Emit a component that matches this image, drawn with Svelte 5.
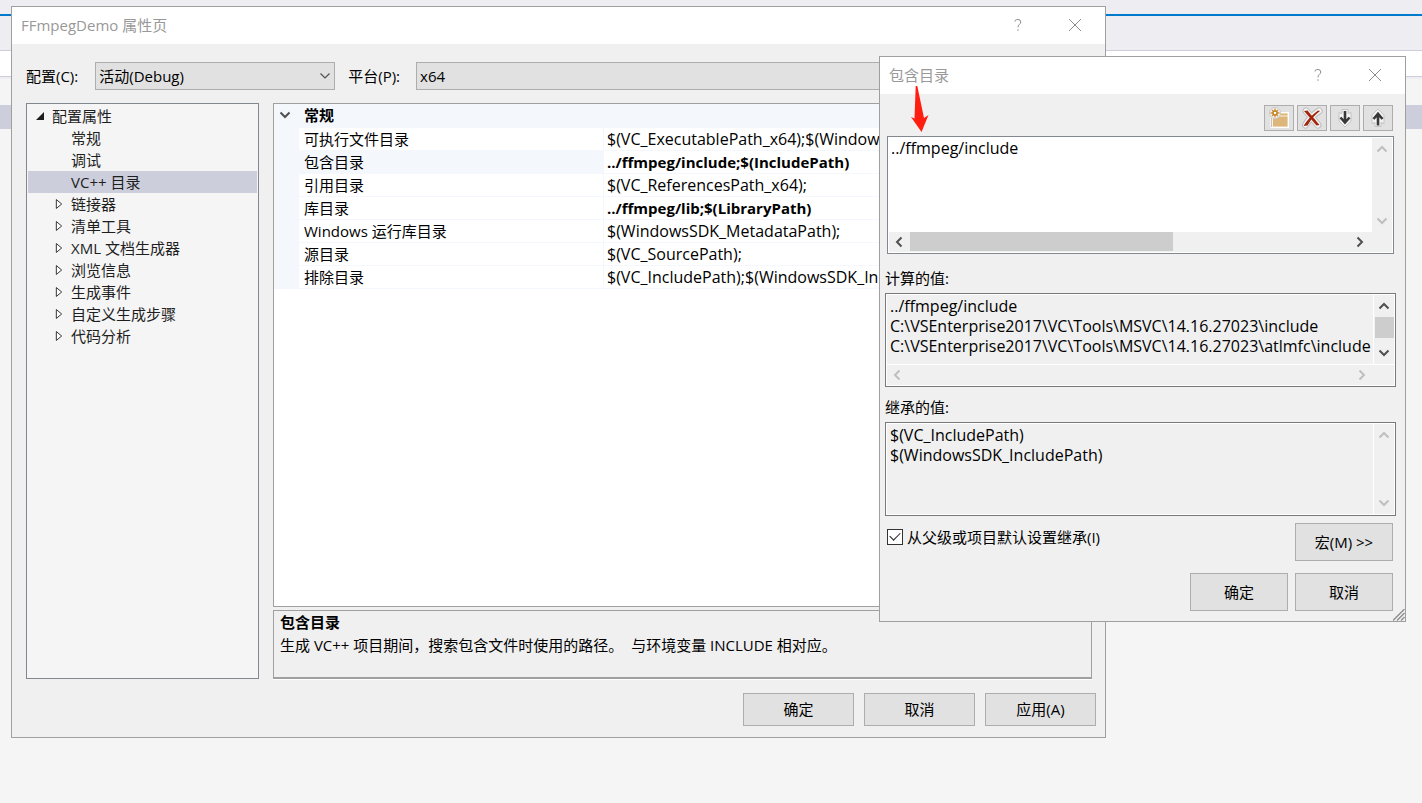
<script>
  const tree = [
    { label: '常规' },
    { label: '调试' },
    { label: 'VC++ 目录', selected: true },
    { label: '链接器', parent: true },
    { label: '清单工具', parent: true },
    { label: 'XML 文档生成器', parent: true },
    { label: '浏览信息', parent: true },
    { label: '生成事件', parent: true },
    { label: '自定义生成步骤', parent: true },
    { label: '代码分析', parent: true }
  ];

  const properties = [
    { name: '可执行文件目录', value: '$(VC_ExecutablePath_x64);$(Windows' },
    { name: '包含目录', value: '../ffmpeg/include;$(IncludePath)', changed: true, active: true },
    { name: '引用目录', value: '$(VC_ReferencesPath_x64);' },
    { name: '库目录', value: '../ffmpeg/lib;$(LibraryPath)', changed: true },
    { name: 'Windows 运行库目录', value: '$(WindowsSDK_MetadataPath);' },
    { name: '源目录', value: '$(VC_SourcePath);' },
    { name: '排除目录', value: '$(VC_IncludePath);$(WindowsSDK_Inc' }
  ];

  let includes = $state('../ffmpeg/include');
  let inherit = $state(true);

  const evaluated = [
    '../ffmpeg/include',
    'C:\\VSEnterprise2017\\VC\\Tools\\MSVC\\14.16.27023\\include',
    'C:\\VSEnterprise2017\\VC\\Tools\\MSVC\\14.16.27023\\atlmfc\\include'
  ].join('\n');
  const inherited = '$(VC_IncludePath)\n$(WindowsSDK_IncludePath)';

  const chevrons = {
    up: 'M1.5 8.5 L6 4 L10.5 8.5',
    down: 'M1.5 3.5 L6 8 L10.5 3.5',
    left: 'M8.5 1.5 L4 6 L8.5 10.5',
    right: 'M3.5 1.5 L8 6 L3.5 10.5'
  };
</script>

{#snippet chevron(dir, muted)}
  <svg class="chevron" class:muted width="12" height="12" viewBox="0 0 12 12" aria-hidden="true">
    <path d={chevrons[dir]} />
  </svg>
{/snippet}

{#snippet captionButtons()}
  <button class="caption" type="button" aria-label="帮助">
    <svg width="10" height="14" viewBox="0 0 10 14" aria-hidden="true">
      <path d="M2 3.5 V2.6 Q3 1.5 5 1.5 Q7.8 1.5 7.8 4 Q7.8 5.5 6.2 6.6 Q5 7.5 5 9.3 M5 11.3 V12.8" />
    </svg>
  </button>
  <button class="caption" type="button" aria-label="关闭">
    <svg width="14" height="14" viewBox="0 0 14 14" aria-hidden="true">
      <path d="M1 1 L13 13 M13 1 L1 13" />
    </svg>
  </button>
{/snippet}

<div class="desktop">
  <div class="ide" aria-hidden="true">
    <div class="menu-strip"></div>
    <div class="tool-strip"></div>
    <div class="tab-strip"></div>
    <div class="editor"><div class="band"></div></div>
  </div>

  <section class="window pages" aria-labelledby="pages-title">
    <header>
      <h1 id="pages-title">FFmpegDemo 属性页</h1>
      {@render captionButtons()}
    </header>

    <div class="filters">
      <label for="config">配置(C):</label>
      <div class="combo config">
        <select id="config"><option>活动(Debug)</option></select>
        <svg width="12" height="8" viewBox="0 0 12 8" aria-hidden="true"><path d="M1.5 1.5 L6 6 L10.5 1.5" /></svg>
      </div>
      <label for="platform">平台(P):</label>
      <div class="combo platform">
        <select id="platform"><option>x64</option></select>
      </div>
    </div>

    <div class="panes">
      <ul class="tree">
        <li class="root">
          <svg width="10" height="10" viewBox="0 0 10 10" aria-hidden="true"><path d="M9 1 V9 H1 Z" fill="#1e1e1e" /></svg>
          配置属性
        </li>
        {#each tree as node}
          <li class:selected={node.selected}>
            <span class="twisty">
              {#if node.parent}
                <svg width="9" height="12" viewBox="0 0 9 12" aria-hidden="true"><path d="M1.500 1 V11 L7.500 6 Z" fill="#fff" stroke="#1e1e1e" /></svg>
              {/if}
            </span>
            {node.label}
          </li>
        {/each}
      </ul>

      <div class="details">
        <div class="grid">
          <table>
            <colgroup>
              <col class="col-gutter" />
              <col class="col-name" />
              <col />
            </colgroup>
            <thead>
              <tr>
                <th class="gutter">{@render chevron('down', false)}</th>
                <th colspan="2">常规</th>
              </tr>
            </thead>
            <tbody>
              {#each properties as row}
                <tr class:active={row.active}>
                  <td class="gutter"></td>
                  <td class="name">{row.name}</td>
                  <td class="value" class:changed={row.changed}>{row.value}</td>
                </tr>
              {/each}
            </tbody>
          </table>
        </div>
        <div class="description">
          <h2>包含目录</h2>
          <p>生成 VC++ 项目期间，搜索包含文件时使用的路径。&nbsp; 与环境变量 INCLUDE 相对应。</p>
        </div>
      </div>
    </div>

    <footer>
      <button type="button">确定</button>
      <button type="button">取消</button>
      <button type="button">应用(A)</button>
    </footer>
  </section>

  <section class="window includes" aria-labelledby="includes-title">
    <header>
      <h1 id="includes-title">包含目录</h1>
      {@render captionButtons()}
    </header>

    <div class="toolbar">
      <button type="button" aria-label="新行">
        <svg width="22" height="22" viewBox="0 0 22 22" aria-hidden="true">
          <path d="M3 11 V20.500 H20.500 V5.500 H12" fill="#fff3dc" stroke="#fff" />
          <path d="M5 19.500 V10 H11 V9.500 H19.500 V19.500 Z" fill="#dcb67a" />
          <path d="M12.500 6.500 H19.500 V8.500 H11.500 Z" fill="#dcb67a" />
          <path d="M3.500 11 V20" stroke="#c4c4c4" />
          <circle cx="7" cy="6" r="5.500" fill="#f8f5ee" stroke="#c8c8c8" />
          <path d="M7 1.500 V10.500 M2.500 6 H11.500 M4 3 L10 9 M10 3 L4 9" stroke="#c98e40" stroke-width="1.300" />
          <circle cx="7" cy="6" r="2" fill="#fff" stroke="#c27d1a" stroke-width="1.300" />
        </svg>
      </button>
      <button type="button" aria-label="删除行">
        <svg width="22" height="22" viewBox="0 0 22 22" aria-hidden="true">
          <path d="M5 4 L17 18 M18 4 Q10 9 4.500 18" fill="none" stroke="#bdbdbd" stroke-width="7" stroke-linecap="round" />
          <path d="M5 4 L17 18 M18 4 Q10 9 4.500 18" fill="none" stroke="#f5f5f5" stroke-width="5" stroke-linecap="round" />
          <path d="M3 4 L6.500 3.500 L18.500 18 L15.500 18.500 Z" fill="#a1260d" />
          <path d="M17 3.500 L19 4 Q11 10 6.500 18.500 L2.500 19 Q8 10 17 3.500 Z" fill="#a1260d" />
        </svg>
      </button>
      <button type="button" aria-label="下移一行">
        <svg width="22" height="22" viewBox="0 0 22 22" aria-hidden="true">
          <path d="M8 2.500 H14 V6.500 L17 5.500 V14 L11 20 L5 14 V5.500 L8 6.500 Z" fill="#f3f3f3" stroke="#c3c3c3" />
          <path d="M11 4 V16 M6.500 10.500 L11 15.500 L15.500 10.500" fill="none" stroke="#383838" stroke-width="2.600" />
        </svg>
      </button>
      <button type="button" aria-label="上移一行">
        <svg width="22" height="22" viewBox="0 0 22 22" aria-hidden="true">
          <path d="M8 19.500 H14 V15.500 L17 16.500 V8 L11 2 L5 8 V16.500 L8 15.500 Z" fill="#f3f3f3" stroke="#c3c3c3" />
          <path d="M11 18.500 V6.500 M6.500 12 L11 6.800 L15.500 12" fill="none" stroke="#383838" stroke-width="2.600" />
        </svg>
      </button>
    </div>

    <div class="editbox edit">
      <textarea aria-label="包含目录" wrap="off" spellcheck="false" bind:value={includes}></textarea>
      <div class="vscroll">{@render chevron('up', true)}{@render chevron('down', true)}</div>
      <div class="hscroll">
        {@render chevron('left', false)}
        <div class="track"><div class="thumb"></div></div>
        {@render chevron('right', false)}
      </div>
    </div>

    <label class="caption-text" for="evaluated">计算的值:</label>
    <div class="editbox evaluated">
      <textarea id="evaluated" wrap="off" spellcheck="false" readonly value={evaluated}></textarea>
      <div class="vscroll">
        {@render chevron('up', false)}
        <div class="thumb"></div>
        {@render chevron('down', false)}
      </div>
      <div class="hscroll">{@render chevron('left', true)}{@render chevron('right', true)}</div>
    </div>

    <label class="caption-text tight" for="inherited">继承的值:</label>
    <div class="editbox">
      <textarea id="inherited" wrap="off" spellcheck="false" readonly value={inherited}></textarea>
      <div class="vscroll">{@render chevron('up', true)}{@render chevron('down', true)}</div>
    </div>

    <div class="options">
      <label class="check">
        <input type="checkbox" bind:checked={inherit} />
        从父级或项目默认设置继承(I)
      </label>
      <button type="button">宏(M) &gt;&gt;</button>
    </div>
    <footer>
      <button type="button">确定</button>
      <button type="button">取消</button>
    </footer>

    <svg class="grip" width="12" height="12" viewBox="0 0 12 12" aria-hidden="true">
      <path d="M0 11.500 L11.500 0 M4 11.500 L11.500 4 M8 11.500 L11.500 8" stroke="#8c8c8c" stroke-width="1.300" />
    </svg>
    <svg class="pointer" width="20" height="48" viewBox="0 0 20 48" aria-hidden="true">
      <path d="M5.700 1 H7.300 L14 33 L18.500 30 L11.500 47 L1 32 L4.500 33.500 Z" fill="#ff1e10" />
    </svg>
  </section>
</div>

<style>
  :global(body) {
    margin: 0;
    background: #f5f5f5;
  }

  .desktop {
    position: relative;
    min-height: 100vh;
    overflow: hidden;
    box-sizing: border-box;
    font: 15px/20px "Open Sans", "Noto Sans CJK SC", sans-serif;
    color: #000;
  }
  .desktop *,
  .desktop *::before {
    box-sizing: border-box;
  }

  button,
  select,
  textarea {
    font: inherit;
    color: inherit;
    margin: 0;
    border-radius: 0;
  }
  h1,
  h2,
  p,
  ul {
    margin: 0;
    padding: 0;
    font-size: 15px;
  }

  .menu-strip {
    height: 16px;
    background: #eeeef2;
    border-bottom: 2px solid #007acc;
  }
  .tool-strip {
    height: 35px;
    background: #eeeef2;
    border-bottom: 1px solid #cccedb;
  }
  .tab-strip {
    height: 26px;
    background: #fff;
    border-bottom: 1px solid #cccedb;
  }
  .editor {
    border-top: 2px solid #eeeef2;
    padding-top: 26px;
  }
  .band {
    height: 24px;
    background: #cccedb;
  }

  .window {
    position: absolute;
    display: flex;
    flex-direction: column;
    background: #f0f0f0;
    border: 1px solid #9f9f9f;
  }
  .pages {
    left: 11px;
    right: 316px;
    top: 6px;
  }
  .includes {
    width: 527px;
    right: 16px;
    top: 56px;
  }

  header {
    display: flex;
    align-items: center;
    height: 37px;
    padding: 0 2px 2px 9px;
    background: #fff;
  }
  h1 {
    flex: 1;
    font-weight: 400;
    color: #999;
  }
  .caption {
    display: flex;
    align-items: center;
    justify-content: center;
    width: 57px;
    height: 35px;
    padding: 0;
    border: 0;
    background: none;
  }
  .caption path {
    fill: none;
    stroke: #8c8c8c;
  }

  .filters {
    display: flex;
    align-items: center;
    padding: 18px 13px 13px 14px;
  }
  .combo {
    position: relative;
    height: 28px;
  }
  .config {
    width: 240px;
    margin: 0 13px 0 17px;
  }
  .platform {
    flex: 1;
    margin-left: 16px;
  }
  .combo select {
    appearance: none;
    width: 100%;
    height: 28px;
    padding: 0 24px 0 3px;
    border: 1px solid #adadad;
    background: #e1e1e1;
  }
  .combo svg {
    position: absolute;
    right: 4px;
    top: 10px;
    pointer-events: none;
  }
  .combo path {
    fill: none;
    stroke: #505050;
    stroke-width: 1.2;
  }

  .panes {
    display: grid;
    grid-template-columns: 233px 1fr;
    gap: 14px;
    padding: 0 13px 0 14px;
  }
  .tree {
    list-style: none;
    padding: 1px;
    border: 1px solid #828790;
    background: #f5f5f5;
    color: #1e1e1e;
  }
  .tree li {
    display: flex;
    align-items: center;
    height: 22px;
    padding-left: 27px;
    gap: 8px;
  }
  .tree .root {
    padding-left: 7px;
    gap: 7px;
  }
  .tree .selected {
    background: #cccedb;
  }
  .twisty {
    display: flex;
    width: 8px;
  }

  .details {
    display: flex;
    flex-direction: column;
    gap: 3px;
    min-width: 0;
  }
  .grid {
    min-height: 504px;
    border: 1px solid #a0a0a0;
    background: #fff;
    overflow: hidden;
  }
  table {
    width: 100%;
    table-layout: fixed;
    border-collapse: separate;
    border-spacing: 0;
  }
  .col-gutter {
    width: 25px;
  }
  .col-name {
    width: 305px;
  }
  th,
  td {
    height: 23px;
    padding: 0 0 0 5px;
    text-align: left;
    white-space: nowrap;
    line-height: 20px;
  }
  th {
    height: 24px;
    padding-bottom: 2px;
    background: #f4f7fc;
  }
  td {
    border-bottom: 1px solid #f4f7fc;
  }
  .gutter {
    background: #f4f7fc;
  }
  .gutter .chevron {
    display: block;
  }
  .name {
    border-right: 1px solid #f4f7fc;
  }
  .active .name {
    background: #f4f7fc;
  }
  .value {
    padding-left: 3px;
    font-size: 16px;
  }
  .changed {
    font-size: 15px;
    font-weight: 700;
  }

  .description {
    min-height: 69px;
    padding: 0 6px;
    border: 1px solid #a0a0a0;
    border-bottom-width: 2px;
    box-shadow: 0 1px 0 #fff;
    line-height: 23px;
  }
  h2 {
    font-weight: 700;
    line-height: 23px;
  }

  footer {
    display: flex;
    justify-content: flex-end;
  }
  .pages footer {
    gap: 10px;
    padding: 14px 9px 11px;
  }
  footer button,
  .options button {
    height: 38px;
    width: 98px;
    padding: 0;
    border: 1px solid #adadad;
    background: #e1e1e1;
  }
  .pages footer button {
    width: 111px;
    height: 33px;
    padding-bottom: 2px;
  }

  .toolbar {
    display: flex;
    justify-content: flex-end;
    gap: 3px;
    padding: 11px 12px 5px;
  }
  .toolbar button {
    display: flex;
    align-items: center;
    justify-content: center;
    width: 30px;
    height: 26px;
    padding: 0;
    border: 1px solid #adadad;
    background: #e1e1e1;
  }

  .editbox {
    display: grid;
    grid-template-columns: 1fr 20px;
    margin: 0 9px 0 5px;
    padding: 1px;
    height: 94px;
    border: 1px solid #7a7a7a;
    background: #fff;
    gap: 1px;
  }
  .edit {
    height: 118px;
    margin: 0 11px 0 7px;
    grid-template-rows: 1fr 20px;
    gap: 0;
    border-color: #828790;
  }
  .evaluated {
    grid-template-rows: 1fr 20px;
  }
  textarea {
    display: block;
    width: 100%;
    height: 100%;
    min-height: 0;
    padding: 1px 0 0 3px;
    font-size: 16px;
    border: 0;
    outline: 0;
    resize: none;
    overflow: hidden;
    background: #f0f0f0;
    white-space: pre;
  }
  .edit textarea {
    padding: 0 0 0 2px;
    background: #fff;
  }
  .vscroll {
    display: flex;
    flex-direction: column;
    align-items: center;
    justify-content: space-between;
    padding: 5px 0;
    background: #f0f0f0;
  }
  .hscroll {
    grid-column: 1 / -1;
    display: flex;
    align-items: center;
    justify-content: space-between;
    padding: 0 26px 0 4px;
    background: #f0f0f0;
  }
  .track {
    flex: 1;
    height: 100%;
    margin: 0 5px;
  }
  .thumb {
    background: #cdcdcd;
  }
  .hscroll .thumb {
    width: 60%;
    height: 19px;
  }
  .vscroll .thumb {
    width: 19px;
    height: 21px;
    margin-bottom: 4px;
  }
  .chevron {
    flex: none;
  }
  .chevron path {
    fill: none;
    stroke: #505050;
    stroke-width: 2;
  }
  .chevron.muted path {
    stroke: #bfbfbf;
  }

  .caption-text {
    padding: 14px 5px 5px;
  }
  .tight {
    padding-top: 10px;
  }

  .options {
    display: flex;
    justify-content: space-between;
    align-items: flex-start;
    padding: 7px 12px 12px 7px;
  }
  .check {
    display: flex;
    align-items: center;
    gap: 4px;
    padding-top: 4px;
  }
  .check input {
    appearance: none;
    width: 16px;
    height: 16px;
    margin: 0;
    border: 1px solid #333;
    background: #fff;
  }
  .check input:checked::before {
    content: "";
    display: block;
    width: 10px;
    height: 6px;
    margin: 2px;
    border-left: 1px solid #222;
    border-bottom: 1px solid #222;
    transform: rotate(-45deg);
  }
  .includes footer {
    gap: 7px;
    padding: 0 12px 10px;
  }

  .grip {
    position: absolute;
    right: 0;
    bottom: 0;
  }
  .pointer {
    position: absolute;
    left: 30px;
    top: 28px;
  }
</style>
